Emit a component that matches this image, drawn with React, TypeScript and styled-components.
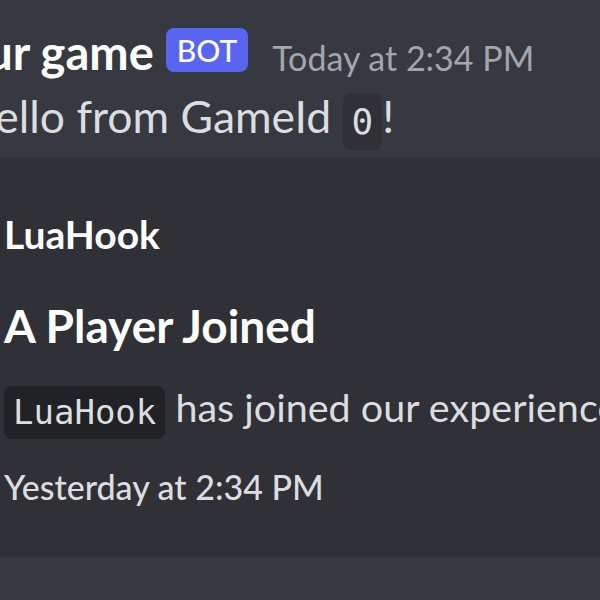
import React from 'react';
import styled, { createGlobalStyle } from 'styled-components';

const GlobalStyle = createGlobalStyle`
  html, body {
    margin: 0;
    padding: 0;
    background: #36393f;
    overflow: hidden;
  }
  body {
    font-family: Lato, "Noto Sans", sans-serif;
  }
`;

const Page = styled.div`
  width: 600px;
  height: 600px;
  overflow: hidden;
  box-sizing: border-box;
  padding-top: 17px;
  background: #36393f;
`;

const MessageContents = styled.div`
  margin-left: -38px;
  white-space: nowrap;
`;

const Header = styled.div`
  display: flex;
  align-items: center;
  height: 66px;
  margin-left: -28px;
`;

const Username = styled.span`
  font-size: 47px;
  font-weight: 700;
  color: #ffffff;
  margin-top: 4px;
`;

const BotTag = styled.span`
  display: inline-flex;
  align-items: center;
  height: 44px;
  margin-left: 12px;
  padding: 0 11px;
  border-radius: 8px;
  background: #5865f2;
  color: #ffffff;
  font-size: 30px;
  font-weight: 500;
`;

const Timestamp = styled.span`
  margin-left: 24px;
  margin-top: 14px;
  font-size: 34px;
  color: #a3a6aa;
`;

const MessageText = styled.div`
  font-size: 44.5px;
  line-height: 66px;
  color: #dcddde;
`;

const InlineCode = styled.code<{ $dark?: boolean }>`
  display: inline-block;
  font-family: "DejaVu Sans Mono", "Liberation Mono", monospace;
  font-size: ${({ $dark }) => ($dark ? '34px' : '36px')};
  line-height: ${({ $dark }) => ($dark ? '53px' : '57px')};
  padding: 0 9px;
  border-radius: 8px;
  background: ${({ $dark }) => ($dark ? '#202225' : '#2f3136')};
  color: #dcddde;
  vertical-align: middle;
`;

const Embed = styled.div`
  margin-top: 7px;
  width: 760px;
  height: 400px;
  box-sizing: border-box;
  padding-left: 31px;
  border-left: 11px solid #5865f2;
  border-radius: 11px;
  background: #2f3136;
  display: flex;
  flex-direction: column;
`;

const EmbedAuthor = styled.div`
  margin-top: 52px;
  font-size: 39px;
  line-height: 50px;
  font-weight: 700;
  color: #ffffff;
`;

const EmbedTitle = styled.div`
  margin-top: 37px;
  font-size: 46px;
  line-height: 60px;
  font-weight: 700;
  color: #ffffff;
`;

const EmbedDescription = styled.div`
  margin-top: 21px;
  font-size: 39.5px;
  line-height: 60px;
  color: #dcddde;
`;

const EmbedFooter = styled.div`
  margin-top: 26px;
  font-size: 34px;
  line-height: 44px;
  font-weight: 500;
  color: #dcddde;
`;

export default function App() {
  return (
    <>
      <GlobalStyle />
      <Page>
        <MessageContents>
          <Header>
            <Username>Your game</Username>
            <BotTag>BOT</BotTag>
            <Timestamp>Today at 2:34 PM</Timestamp>
          </Header>
          <MessageText>
            Hello from GameId <InlineCode>0</InlineCode>!
          </MessageText>
          <Embed>
            <EmbedAuthor>LuaHook</EmbedAuthor>
            <EmbedTitle>A Player Joined</EmbedTitle>
            <EmbedDescription>
              <InlineCode $dark>LuaHook</InlineCode> has joined our experience!
            </EmbedDescription>
            <EmbedFooter>Yesterday at 2:34 PM</EmbedFooter>
          </Embed>
        </MessageContents>
      </Page>
    </>
  );
}
